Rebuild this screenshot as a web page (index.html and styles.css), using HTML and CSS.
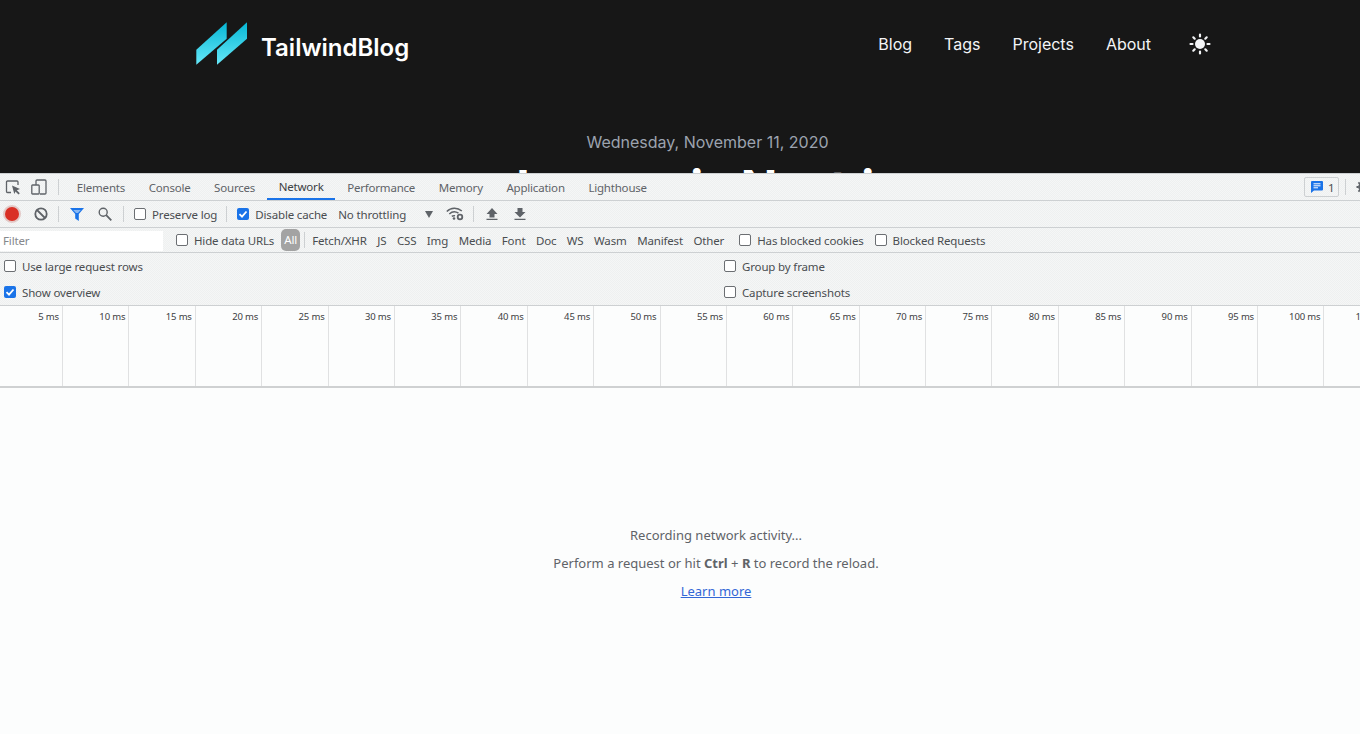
FILE: index.html
```html
<!DOCTYPE html>
<html>

<head>
  <meta charset="utf-8">
  <title>Images in Next.js</title>
  <link rel="stylesheet" href="styles.css">
</head>

<body>

  <header class="site">
    <div class="siteBar">
      <a class="brand">
        <svg class="logo" width="52" height="43" viewBox="0 0 52 43">
          <defs>
            <linearGradient id="logoGrad" x1="0" y1="0" x2="0" y2="1">
              <stop offset="0" stop-color="#06b6d4"></stop>
              <stop offset="1" stop-color="#67e8f9"></stop>
            </linearGradient>
          </defs>
          <path d="M30.700 .3V16.700L.3 42.700V27.700Z" fill="url(#logoGrad)"></path>
          <path d="M51 .3V16.700L21 42.700V27.700Z" fill="url(#logoGrad)"></path>
        </svg>
        <span class="brandName">TailwindBlog</span>
      </a>
      <nav class="siteNav">
        <a>Blog</a>
        <a>Tags</a>
        <a>Projects</a>
        <a>About</a>
        <svg class="sun" width="22" height="22" viewBox="0 0 22 22">
          <circle cx="11" cy="11" r="5" fill="#f3f4f6"></circle>
          <path d="M11 1.500V3.500M11 18.500V20.500M1.500 11H3.500M18.500 11H20.500M4.300 4.300L5.700 5.700M16.300 16.300L17.700 17.700M4.300 17.700L5.700 16.300M16.300 5.700L17.700 4.300" stroke="#f3f4f6" stroke-width="2.200" stroke-linecap="round"></path>
        </svg>
      </nav>
    </div>
    <div class="postHead">
      <div class="postDate">Wednesday, November 11, 2020</div>
      <h1 class="postTitle">Images in Next.js</h1>
    </div>
  </header>

  <section class="devtools">

    <div class="tabBar">
      <svg class="ico inspectIco" width="16" height="16" viewBox="0 0 16 16">
        <path d="M6 13.500H2.500A1 1 0 0 1 1.500 12.500V3A1 1 0 0 1 2.500 2H12A1 1 0 0 1 13 3V6" fill="none" stroke="#5f6368" stroke-width="1.300"></path>
        <path d="M7 6.500L15 10L11.800 11.300L14.800 14.300L13.500 15.500L10.500 12.500L9.300 15Z" fill="#5f6368"></path>
      </svg>
      <svg class="ico deviceIco" width="16" height="16" viewBox="0 0 16 16">
        <path d="M5 5.500V2A1 1 0 0 1 6 1H14A1 1 0 0 1 15 2V14A1 1 0 0 1 14 15H9M1.500 6H7.500A.7 .7 0 0 1 8.200 6.700V14.300A.7 .7 0 0 1 7.500 15H1.500A.7 .7 0 0 1 .8 14.300V6.700A.7 .7 0 0 1 1.500 6Z" fill="none" stroke="#5f6368" stroke-width="1.300"></path>
      </svg>
      <i class="sep tabSep"></i>
      <ul class="tabs">
        <li class="tab">Elements</li>
        <li class="tab">Console</li>
        <li class="tab">Sources</li>
        <li class="tab active">Network</li>
        <li class="tab">Performance</li>
        <li class="tab">Memory</li>
        <li class="tab">Application</li>
        <li class="tab">Lighthouse</li>
      </ul>
      <div class="tabRight">
        <span class="issues">
          <svg width="12" height="12" viewBox="0 0 12 12">
            <path d="M1 0H11A1 1 0 0 1 12 1V8.500A1 1 0 0 1 11 9.500H3L0 12V1A1 1 0 0 1 1 0Z" fill="#1a73e8"></path>
            <path d="M2.500 2.800H9.500M2.500 4.800H9.500M2.500 6.800H7" stroke="#fff" stroke-width="1"></path>
          </svg>
          1
        </span>
        <i class="sep"></i>
        <svg class="gear" width="14" height="14" viewBox="0 0 14 14">
          <circle cx="7" cy="7" r="3.500" fill="none" stroke="#5f6368" stroke-width="2.600"></circle>
          <path d="M7 .5V13.500M.5 7H13.500M2.400 2.400L11.600 11.600M2.400 11.600L11.600 2.400" stroke="#5f6368" stroke-width="1.800" stroke-dasharray="2.200 8.600"></path>
        </svg>
      </div>
    </div>

    <div class="toolBar">
      <span class="recordBtn"></span>
      <svg class="ico clearIco" width="14" height="14" viewBox="0 0 14 14">
        <circle cx="7" cy="7" r="5.700" fill="none" stroke="#5f6368" stroke-width="1.800"></circle>
        <path d="M3 3L11 11" stroke="#5f6368" stroke-width="1.800"></path>
      </svg>
      <i class="sep toolSep1"></i>
      <svg class="ico filterIco" width="14" height="13" viewBox="0 0 14 13">
        <path d="M0 0H14L8.800 6V13L5.200 10.500V6Z" fill="#1a73e8"></path>
        <path d="M3.200 2H10.800L8 5H6Z" fill="#8ab8f2"></path>
      </svg>
      <svg class="ico searchIco" width="14" height="14" viewBox="0 0 14 14">
        <circle cx="5.200" cy="5.200" r="4" fill="none" stroke="#5f6368" stroke-width="1.400"></circle>
        <path d="M8.200 8.200L13.300 13.300" stroke="#5f6368" stroke-width="1.800"></path>
      </svg>
      <i class="sep toolSep2"></i>
      <label class="check preserve"><span class="box"></span>Preserve log</label>
      <i class="sep toolSep3"></i>
      <label class="check"><span class="box on"></span>Disable cache</label>
      <span class="throttle">No throttling</span>
      <span class="arrow"></span>
      <svg class="ico wifiIco" width="18" height="14" viewBox="0 0 18 14">
        <path d="M.8 4.500A11 11 0 0 1 15.800 4M3.300 7A7.400 7.400 0 0 1 12.500 6.200M5.800 9.400A3.600 3.600 0 0 1 9 8.800" fill="none" stroke="#5f6368" stroke-width="1.500"></path>
        <circle cx="8" cy="11.500" r="1.300" fill="#5f6368"></circle>
        <circle cx="14" cy="10" r="2.300" fill="none" stroke="#5f6368" stroke-width="1.800"></circle>
      </svg>
      <i class="sep toolSep4"></i>
      <svg class="ico upIco" width="12" height="12" viewBox="0 0 12 12">
        <path d="M6 0L11.500 6H8.500V9.500H3.500V6H.5ZM.5 10.800H11.500V12H.5Z" fill="#5f6368"></path>
      </svg>
      <svg class="ico downIco" width="12" height="12" viewBox="0 0 12 12">
        <path d="M3.500 0H8.500V4H11.500L6 9.500L.5 4H3.500ZM.5 10.800H11.500V12H.5Z" fill="#5f6368"></path>
      </svg>
    </div>

    <div class="filterBar">
      <div class="filterInput">Filter</div>
      <label class="check hideUrls"><span class="box"></span>Hide data URLs</label>
      <span class="pill">All</span>
      <i class="sep pillSep"></i>
      <ul class="types">
        <li>Fetch/XHR</li>
        <li>JS</li>
        <li>CSS</li>
        <li>Img</li>
        <li>Media</li>
        <li>Font</li>
        <li>Doc</li>
        <li>WS</li>
        <li>Wasm</li>
        <li>Manifest</li>
        <li>Other</li>
      </ul>
      <label class="check blockedCookies"><span class="box"></span>Has blocked cookies</label>
      <label class="check blockedReq"><span class="box"></span>Blocked Requests</label>
    </div>

    <div class="settings">
      <label class="check"><span class="box"></span>Use large request rows</label>
      <label class="check"><span class="box"></span>Group by frame</label>
      <label class="check"><span class="box on"></span>Show overview</label>
      <label class="check"><span class="box"></span>Capture screenshots</label>
    </div>

    <div class="timeline">
      <div class="tick">5 ms</div>
      <div class="tick">10 ms</div>
      <div class="tick">15 ms</div>
      <div class="tick">20 ms</div>
      <div class="tick">25 ms</div>
      <div class="tick">30 ms</div>
      <div class="tick">35 ms</div>
      <div class="tick">40 ms</div>
      <div class="tick">45 ms</div>
      <div class="tick">50 ms</div>
      <div class="tick">55 ms</div>
      <div class="tick">60 ms</div>
      <div class="tick">65 ms</div>
      <div class="tick">70 ms</div>
      <div class="tick">75 ms</div>
      <div class="tick">80 ms</div>
      <div class="tick">85 ms</div>
      <div class="tick">90 ms</div>
      <div class="tick">95 ms</div>
      <div class="tick">100 ms</div>
      <div class="tick">105 ms</div>
    </div>

    <div class="empty">
      <p>Recording network activity...</p>
      <p>Perform a request or hit <b>Ctrl</b> + <b>R</b> to record the reload.</p>
      <p><a href="#">Learn more</a></p>
    </div>

  </section>

</body>

</html>
```

FILE: styles.css
```css
* {
  box-sizing: border-box;
}

html, body {
  margin: 0;
  height: 100%;
}

body {
  background: #fcfdfd;
  overflow: hidden;
}

ul {
  list-style: none;
  margin: 0;
  padding: 0;
}

p {
  margin: 0;
}

/* blog page behind the devtools */
.site {
  height: 173px;
  background: #171717;
  overflow: hidden;
  font-family: Inter, sans-serif;
  color: #f3f4f6;
}

.siteBar {
  display: flex;
  justify-content: space-between;
  align-items: center;
  padding: 22px 149px 0 196px;
}

.brand {
  display: flex;
  align-items: center;
}

.brandName {
  margin: 7px 0 0 13px;
  font-size: 24px;
  font-weight: 600;
  color: #fff;
}

.siteNav {
  display: flex;
  align-items: center;
  gap: 32px;
  font-size: 16px;
  font-weight: 400;
}

.sun {
  margin-left: 6px;
}

.postHead {
  padding: 65px 0 0 55px;
  text-align: center;
}

.postDate {
  font-size: 16px;
  line-height: 24px;
  color: #9ca3af;
}

.postTitle {
  margin: 6px 0 0;
  font-size: 48px;
  line-height: 56px;
  font-weight: 700;
  letter-spacing: -1.200px;
  color: #fff;
}

/* devtools panel */
.devtools {
  height: 561px;
  font-family: "Noto Sans", sans-serif;
  font-size: 11.500px;
  letter-spacing: -.15px;
  color: #4a4d50;
}

.tabBar,
.toolBar,
.filterBar,
.settings {
  background: repeating-conic-gradient(#eef0f0 0 25%, #f5f6f6 0 50%) 0 0 / 2px 2px;
  border-bottom: 1px solid #cdd0d2;
}

.tabBar {
  display: flex;
  align-items: center;
  height: 28px;
  padding-left: 5px;
  border-top: 1px solid #cdd0d2;
}

.toolBar {
  display: flex;
  align-items: center;
  height: 27px;
  padding-left: 5px;
}

.filterBar {
  display: flex;
  align-items: center;
  height: 25px;
}

.ico {
  flex: none;
}

.sep {
  flex: none;
  width: 1px;
  height: 16px;
  background: #cdd0d2;
}

.deviceIco {
  margin-left: 10px;
}

.tabSep {
  margin-left: 11px;
}

.tabs {
  display: flex;
  align-self: stretch;
  margin-left: 6px;
  letter-spacing: -.2px;
}

.tab {
  display: flex;
  align-items: center;
  padding: 0 11.800px;
  color: #5f6368;
}

.tab.active {
  color: #3c4043;
  border-bottom: 2px solid #1a73e8;
}

.tabRight {
  display: flex;
  align-items: center;
  margin-left: auto;
  gap: 6px;
  margin-right: -10px;
}

.gear {
  flex: none;
  margin-left: 4px;
}

.issues {
  display: flex;
  align-items: center;
  gap: 5px;
  width: 35px;
  height: 20px;
  padding-left: 6px;
  border: 1px solid #cdd0d2;
  border-radius: 2px;
}

.recordBtn {
  flex: none;
  width: 14px;
  height: 14px;
  border-radius: 50%;
  background: #d93025;
  box-shadow: 0 0 0 2px #e3c9c7;
}

.clearIco {
  margin-left: 15px;
}

.toolSep1 {
  margin-left: 10px;
}

.filterIco {
  margin-left: 11px;
}

.searchIco {
  margin-left: 14px;
}

.toolSep2 {
  margin-left: 11px;
}

.preserve {
  margin-left: 10px;
}

.toolSep3 {
  margin: 0 10px 0 9px;
}

.throttle {
  margin-left: 11px;
}

.arrow {
  margin-left: 19px;
  border-top: 7px solid #5f6368;
  border-left: 4px solid transparent;
  border-right: 4px solid transparent;
}

.wifiIco {
  margin-left: 13px;
}

.toolSep4 {
  margin-left: 9px;
}

.upIco {
  margin-left: 12px;
}

.downIco {
  margin-left: 16px;
}

.check {
  display: flex;
  align-items: center;
  flex: none;
  gap: 6px;
  white-space: nowrap;
}

.box {
  flex: none;
  width: 12px;
  height: 12px;
  border: 1px solid #6b6e72;
  border-radius: 2px;
  background: #fff;
}

.box.on {
  border: 0;
  background: #1a73e8 url("data:image/svg+xml,%3Csvg xmlns='http://www.w3.org/2000/svg' viewBox='0 0 12 12'%3E%3Cpath d='M2.500 6.200L5 8.700L9.500 3.500' fill='none' stroke='%23fff' stroke-width='1.800'/%3E%3C/svg%3E");
}

.filterInput {
  flex: none;
  width: 163px;
  height: 20px;
  margin-top: 2px;
  padding-left: 3px;
  line-height: 20px;
  background: #fff;
  color: #85888c;
}

.hideUrls {
  margin-left: 13px;
}

.pill {
  flex: none;
  width: 19px;
  height: 22px;
  margin-left: 7px;
  line-height: 22px;
  text-align: center;
  border-radius: 5px;
  background: #a3a3a3;
  color: #fff;
}

.pillSep {
  margin-left: 4px;
}

.types {
  display: flex;
  gap: 10.500px;
  margin-left: 7px;
}

.blockedCookies {
  margin-left: 15px;
}

.blockedReq {
  margin-left: 11px;
}

.settings {
  display: grid;
  grid-template-columns: 720px 1fr;
  grid-auto-rows: 26px;
  height: 53px;
  padding-left: 4px;
}

.timeline {
  display: grid;
  grid-template-columns: 63px repeat(21, 66.400px);
  height: 82px;
  background: #fcfdfd;
  border-bottom: 2px solid #cfd1d2;
  overflow: hidden;
}

.tick {
  padding: 4px 3px 0 0;
  text-align: right;
  font-size: 9.500px;
  line-height: 13px;
  white-space: nowrap;
  color: #3c4043;
  border-right: 1px solid #e0e1e2;
}

.empty {
  display: flex;
  flex-direction: column;
  align-items: center;
  padding: 133px 0 0 72px;
  font-size: 13px;
  line-height: 28px;
  letter-spacing: 0;
  color: #5f6368;
}

.empty a {
  color: #3367d6;
}
```
